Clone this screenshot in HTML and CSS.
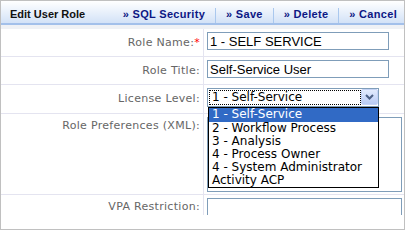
FILE: index.html
```html
<!DOCTYPE html>
<html lang="en">
<head>
    <meta charset="UTF-8">
    <title>Edit User Role</title>
    <link rel="stylesheet" href="styles.css">
</head>
<body>
    <div class="panel">
        <div class="panel-head">
            <span class="panel-title">Edit User Role</span>
            <div class="actions">
                <a href="#">» SQL Security</a>
                <a href="#">» Save</a>
                <a href="#">» Delete</a>
                <a href="#">» Cancel</a>
            </div>
        </div>
        <div class="panel-gap"></div>

        <div class="form-body">
            <div class="row">
                <div class="label">Role Name:<span class="req">*</span></div>
                <div class="field"><input class="text" type="text" value="1 - SELF SERVICE" readonly></div>
            </div>
            <div class="row">
                <div class="label">Role Title:</div>
                <div class="field"><input class="text" type="text" value="Self-Service User" readonly></div>
            </div>
            <div class="row">
                <div class="label">License Level:</div>
                <div class="field">
                    <div class="combo">
                        <span class="combo-value">1 - Self-Service</span>
                        <span class="combo-btn">
                            <svg width="9" height="6" viewBox="0 0 9 6"><path d="M1 1 L4.5 4.5 L8 1" fill="none" stroke="#4d6185" stroke-width="2"/></svg>
                        </span>
                        <ul class="combo-list">
                            <li class="selected">1 - Self-Service</li>
                            <li>2 - Workflow Process</li>
                            <li>3 - Analysis</li>
                            <li>4 - Process Owner</li>
                            <li>4 - System Administrator</li>
                            <li>Activity ACP</li>
                        </ul>
                    </div>
                </div>
            </div>
            <div class="row">
                <div class="label label-top">Role Preferences (XML):</div>
                <div class="field field-tall"><textarea class="area" readonly></textarea></div>
            </div>
            <div class="row">
                <div class="label label-top">VPA Restriction:</div>
                <div class="field"><textarea class="area" readonly></textarea></div>
            </div>
        </div>
    </div>
</body>
</html>
```

FILE: styles.css
```css
body {
    margin: 0;
    background-color: #ffffff;
    font-family: "DejaVu Sans", Verdana, sans-serif;
}

.panel {
    width: 405px;
    height: 230px;
    box-sizing: border-box;
    border: 1px solid #c0c0c0;
    background-color: #ffffff;
    overflow: hidden;
}

.panel-head {
    display: flex;
    height: 24px;
    box-sizing: border-box;
    padding: 7px 0 0 9px;
    background: linear-gradient(to bottom, #ffffff, #d3e2f7);
    border-bottom: 2px solid #a3c0ea;
    font-family: "Liberation Sans", Arial, sans-serif;
    font-size: 11px;
    font-weight: bold;
    line-height: 13px;
}

.panel-title {
    color: #111111;
}

.actions {
    display: flex;
    margin-left: auto;
}

.actions a {
    color: #0c1784;
    text-decoration: none;
    letter-spacing: 0.3px;
    padding: 0 10px;
    border-left: 1px solid #aac8ee;
}

.actions a:first-child {
    border-left: none;
}

.actions a:last-child {
    padding-right: 7px;
}

.panel-gap {
    height: 4px;
    background-color: #eff1f5;
}

.form-body {
    height: 186px;
    overflow: hidden;
}

.row {
    display: flex;
    border-bottom: 1px solid #e4e4f0;
}

.label {
    width: 203px;
    flex-shrink: 0;
    box-sizing: border-box;
    padding: 7px 3px 0 0;
    border-right: 1px solid #e4e4f0;
    text-align: right;
    color: #666666;
    font-size: 11px;
    line-height: 13px;
    letter-spacing: 0.3px;
}

.label-top {
    padding-top: 5px;
}

.req {
    color: #ff0000;
}

.field {
    flex: 1;
    padding: 3px 3px 6px;
}

.field-tall {
    padding-bottom: 2px;
}

.text {
    display: block;
    width: 182px;
    height: 18px;
    box-sizing: border-box;
    margin: 0;
    padding: 1px 2px 0;
    border: 1px solid #7f9db9;
    font-family: "Liberation Sans", Arial, sans-serif;
    font-size: 13px;
    color: #000000;
    outline: none;
}

.combo {
    position: relative;
    display: flex;
    width: 172px;
    height: 19px;
    box-sizing: border-box;
    padding: 1px 0 0 1px;
    border: 1px solid #7f9db9;
    background-color: #ffffff;
    font-size: 12px;
    line-height: 13px;
}

.combo-value {
    width: 152px;
    height: 15px;
    box-sizing: border-box;
    padding: 0 2px;
    border: 1px dotted #000000;
    color: #000000;
    white-space: nowrap;
}

.combo-btn {
    display: flex;
    align-items: center;
    justify-content: center;
    width: 17px;
    height: 16px;
    margin: -1px 0 0 auto;
    box-sizing: border-box;
    border: 1px solid #c4d3f6;
    border-radius: 2px;
    background: linear-gradient(to bottom, #e2ebfd, #b8cbf5);
}

.combo-list {
    position: absolute;
    top: 18px;
    left: 0;
    width: 171px;
    box-sizing: border-box;
    margin: 0;
    padding: 0;
    list-style: none;
    border: 1px solid #000000;
    background-color: #ffffff;
    color: #000000;
    z-index: 5;
}

.combo-list li {
    height: 13px;
    padding-left: 3px;
    white-space: nowrap;
}

.combo-list li.selected {
    height: 14px;
    background-color: #316ac5;
    color: #ffffff;
}

.area {
    display: block;
    width: 195px;
    height: 75px;
    box-sizing: border-box;
    margin: 0;
    border: 1px solid #7f9db9;
    resize: none;
    outline: none;
}
```
